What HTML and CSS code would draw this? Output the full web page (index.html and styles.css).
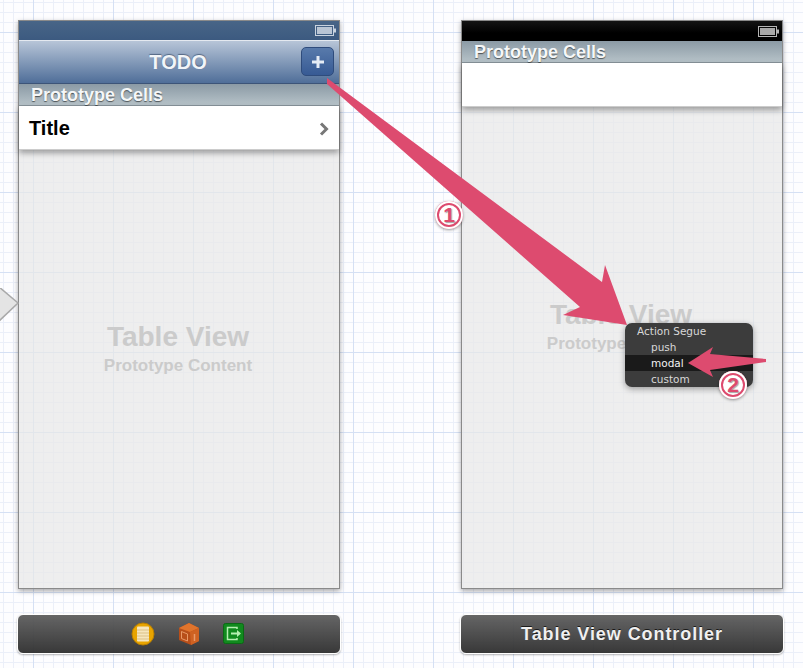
FILE: index.html
```html
<!DOCTYPE html>
<html lang="en">
<head>
  <meta charset="UTF-8">
  <meta name="viewport" content="width=device-width, initial-scale=1.0">
  <title>Storyboard</title>
  <link rel="stylesheet" href="styles.css">
</head>
<body>
  <div class="canvas">

    <div class="column">
      <div class="scene">
        <div class="status-bar status-blue">
          <svg class="battery" width="21" height="11" viewBox="0 0 21 11"><rect x="0.5" y="0.5" width="18" height="10" fill="none" stroke="#c9d3df"/><rect x="2" y="2" width="15" height="7" fill="#b9c5d4"/><rect x="19" y="3.5" width="2" height="4" fill="#c9d3df"/></svg>
        </div>
        <div class="nav-bar">
          <span class="nav-title">TODO</span>
          <div class="add-btn">
            <svg width="14" height="14" viewBox="0 0 14 14"><path d="M7 1v12M1 7h12" stroke="#e6ecf5" stroke-width="3"/></svg>
          </div>
        </div>
        <div class="section-head">Prototype Cells</div>
        <div class="cell">
          <span class="cell-title">Title</span>
          <svg width="10" height="14" viewBox="0 0 10 14"><path d="M2 1.5L7.5 7 2 12.5" fill="none" stroke="#777" stroke-width="3"/></svg>
        </div>
        <div class="placeholder">
          <div class="ph-big">Table View</div>
          <div class="ph-small">Prototype Content</div>
        </div>
      </div>
      <div class="dock dock-icons">
        <!-- view controller icon -->
        <svg width="24" height="24" viewBox="0 0 24 24"><circle cx="12" cy="12" r="11" fill="#e8a400" stroke="#b97f00"/><rect x="6" y="4.5" width="12" height="15" rx="1" fill="#f6e6bd"/><path d="M6 8h12M6 11h12M6 14h12M6 17h12" stroke="#dcc187"/></svg>
        <!-- first responder cube -->
        <svg width="22" height="24" viewBox="0 0 22 24"><path d="M11 1l10 5v13l-8 4-12-5V6z" fill="#b84f1a"/><path d="M1 6l10-5 10 5-9 4z" fill="#e0742c"/><path d="M12 10l9-4v13l-8 4z" fill="#cf6222"/><path d="M3.500 9.500l6 2.500v7l-6-2.500z" fill="none" stroke="#e89a68"/><path d="M16.500 12v7" stroke="#e89a68" stroke-width="1.500"/></svg>
        <!-- exit icon -->
        <svg width="22" height="22" viewBox="0 0 22 22"><rect x="0.500" y="0.500" width="20" height="20" rx="2" fill="#118a1e" stroke="#0a6a14"/><path d="M14 6V4.500H4.500v12H14V15" fill="none" stroke="#b5efb0" stroke-width="1.500"/><path d="M8 10.500h6" stroke="#b5efb0" stroke-width="2"/><path d="M14 7l4 3.500-4 3.500z" fill="#b5efb0"/></svg>
      </div>
    </div>

    <div class="column">
      <div class="scene">
        <div class="status-bar status-black">
          <svg class="battery" width="21" height="11" viewBox="0 0 21 11"><rect x="0.5" y="0.5" width="18" height="10" fill="none" stroke="#b5b5b5"/><rect x="2" y="2" width="15" height="7" fill="#a8a8a8"/><rect x="19" y="3.5" width="2" height="4" fill="#b5b5b5"/></svg>
        </div>
        <div class="section-head">Prototype Cells</div>
        <div class="cell"></div>
        <div class="placeholder">
          <div class="ph-big">Table View</div>
          <div class="ph-small">Prototype Content</div>
        </div>
      </div>
      <div class="dock dock-label">Table View Controller</div>
    </div>

    <svg class="entry-arrow" width="20" height="36" viewBox="0 0 20 36"><path d="M-2 -2L18 15-2 34z" fill="#e4e4e4" stroke="#a9a9a9" stroke-width="1.500"/></svg>

    <div class="segue-menu">
      <div class="menu-head">Action Segue</div>
      <div class="menu-item">push</div>
      <div class="menu-item menu-active">modal</div>
      <div class="menu-item">custom</div>
    </div>

    <svg class="arrows" width="803" height="668" viewBox="0 0 803 668">
      <path d="M327 78L602 282 605 265 627 325 563 315 580 307 327 84z" fill="#dd4b6f"/>
      <path d="M766 359L710 354 713 347 688 363 713 377 710 370 766 362z" fill="#dd4b6f"/>
    </svg>

    <div class="badge badge-one">1</div>
    <div class="badge badge-two">2</div>
  </div>
</body>
</html>
```

FILE: styles.css
```css
html, body {
  margin: 0;
  padding: 0;
}
body {
  font-family: "Liberation Sans", Arial, sans-serif;
  overflow: hidden;
}
.canvas {
  position: relative;
  box-sizing: border-box;
  width: 803px;
  height: 668px;
  padding: 20px 0 0 18px;
  display: flex;
  gap: 121px;
  background-color: #fdfdff;
  background-image:
    linear-gradient(#d5e0f4 1px, transparent 1px),
    linear-gradient(90deg, #d5e0f4 1px, transparent 1px),
    linear-gradient(#ebeff9 1px, transparent 1px),
    linear-gradient(90deg, #ebeff9 1px, transparent 1px);
  background-size: 80px 80px, 80px 80px, 10px 10px, 10px 10px;
  background-position: 0 32px, 33px 0, 0 2px, 3px 0;
}
.column {
  width: 322px;
  display: flex;
  flex-direction: column;
  gap: 25px;
}

/* scene */
.scene {
  box-sizing: border-box;
  height: 569px;
  display: flex;
  flex-direction: column;
  border: 1px solid #8a8a8a;
  background: rgba(232, 232, 232, 0.72);
  box-shadow: 0 2px 5px rgba(0, 0, 0, 0.35);
}
.status-bar {
  height: 19px;
  display: flex;
  justify-content: flex-end;
  align-items: center;
  padding-right: 3px;
}
.status-blue {
  background: linear-gradient(#486587, #3c5a80);
}
.status-black {
  height: 20px;
  background: linear-gradient(#141414, #000 60%);
}
.nav-bar {
  box-sizing: border-box;
  height: 44px;
  display: flex;
  justify-content: center;
  align-items: center;
  padding-right: 2px;
  position: relative;
  border-top: 1px solid #e4e9f0;
  border-bottom: 1px solid #3c5478;
  background: linear-gradient(#b7c5d8, #4f6e99);
}
.nav-title {
  font-size: 20px;
  font-weight: bold;
  color: #f2f5f9;
  text-shadow: 0 -1px 1px rgba(40, 60, 90, 0.6);
}
.add-btn {
  position: absolute;
  top: 6px;
  right: 5px;
  width: 33px;
  height: 29px;
  box-sizing: border-box;
  display: flex;
  justify-content: center;
  align-items: center;
  border: 1px solid #2f4c7c;
  border-radius: 5px;
  background: linear-gradient(#587aab, #375a94);
}
.section-head {
  box-sizing: border-box;
  height: 22px;
  padding-left: 12px;
  font-size: 18px;
  font-weight: bold;
  line-height: 23px;
  color: #f5f7f8;
  text-shadow: 0 1px 1px rgba(0, 0, 0, 0.55);
  border-bottom: 1px solid #88949b;
  background: linear-gradient(#8b9aa5, #b6c2c8);
}
.cell {
  box-sizing: border-box;
  height: 44px;
  display: flex;
  justify-content: space-between;
  align-items: center;
  padding: 2px 10px 0 10px;
  background: #fff;
  border-bottom: 1px solid #ccc;
  box-shadow: 0 3px 6px rgba(0, 0, 0, 0.35);
}
.cell-title {
  font-size: 20px;
  font-weight: bold;
  color: #000;
}
.placeholder {
  flex: 1;
  display: flex;
  flex-direction: column;
  justify-content: center;
  align-items: center;
  padding: 0 2px 41px 0;
  color: #cbcbcb;
  font-weight: bold;
}
.ph-big {
  font-size: 28px;
  line-height: 33px;
}
.ph-small {
  font-size: 17px;
  line-height: 25px;
}

/* dock */
.dock {
  margin: 0 -1px;
  height: 38px;
  display: flex;
  justify-content: center;
  align-items: center;
  border: 1px solid #fff;
  border-radius: 6px;
  background: linear-gradient(rgba(92, 92, 92, 0.94), rgba(44, 44, 44, 0.94));
  box-shadow: 0 1px 2px rgba(0, 0, 0, 0.3);
}
.dock-icons {
  gap: 23px;
  padding-left: 18px;
}
.dock-label {
  font-size: 18px;
  font-weight: bold;
  letter-spacing: 0.93px;
  color: #f0f0f0;
  text-shadow: 0 -1px 0 rgba(0, 0, 0, 0.7);
}

/* overlays */
.entry-arrow {
  position: absolute;
  left: 0;
  top: 288px;
}
.segue-menu {
  position: absolute;
  left: 625px;
  top: 323px;
  width: 128px;
  height: 64px;
  border-radius: 7px;
  overflow: hidden;
  background: #3c3c3c;
  box-shadow: 0 2px 6px rgba(0, 0, 0, 0.35);
  font-family: "DejaVu Sans", sans-serif;
  font-size: 10.5px;
  line-height: 16px;
  color: #d8d8d8;
}
.menu-head {
  padding-left: 12px;
}
.menu-item {
  padding-left: 26px;
}
.menu-active {
  background: #1a1a1a;
  color: #f2f2f2;
}
.arrows {
  position: absolute;
  left: 0;
  top: 0;
  pointer-events: none;
}
.badge {
  position: absolute;
  box-sizing: border-box;
  width: 28px;
  height: 28px;
  display: flex;
  justify-content: center;
  align-items: center;
  border-radius: 50%;
  background: #fff;
  color: #dd4b6f;
  font-size: 21px;
  font-weight: bold;
  text-shadow: 1px 1px 1px rgba(0, 0, 0, 0.35);
  box-shadow: inset 0 0 0 2px #fff, inset 0 0 0 4px #dd4b6f, 0 1px 3px rgba(0, 0, 0, 0.4);
}
.badge-one {
  left: 435px;
  top: 201px;
}
.badge-two {
  left: 719px;
  top: 371px;
}
```
